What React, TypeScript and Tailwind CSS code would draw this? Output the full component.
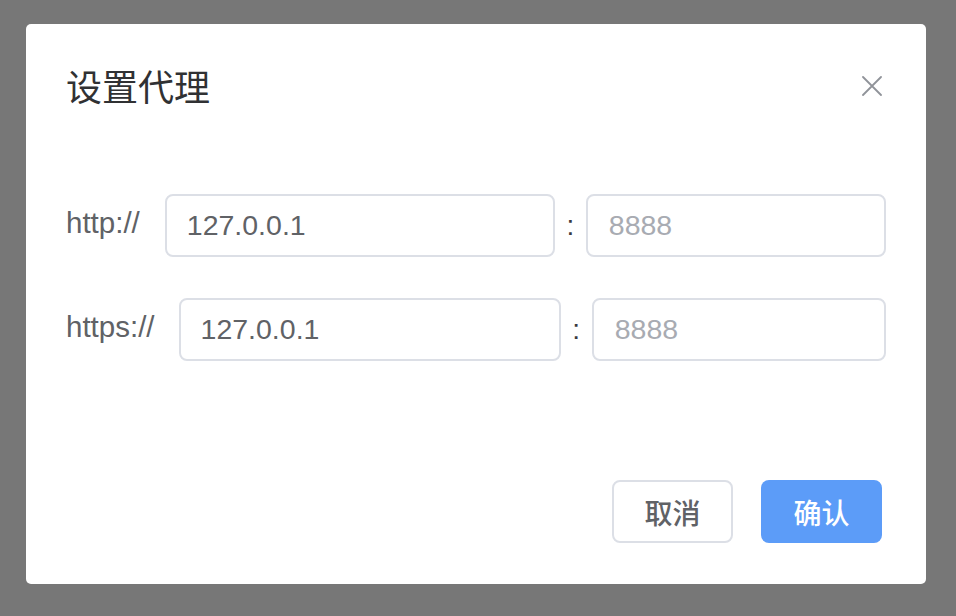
import React from "react";

const sans = "font-['Liberation_Sans','Noto_Sans_CJK_SC',sans-serif]";
const cjk = "font-['Noto_Sans_CJK_SC','Liberation_Sans',sans-serif]";

function Row({ label, host, labelGap }: { label: string; host: string; labelGap: string }) {
  return (
    <div className="flex items-center h-[63px]">
      <span className={`${sans} text-[29.5px] leading-[30px] text-[#606266] pb-[5px] ${labelGap}`}>{label}</span>
      <div className="flex flex-1 items-center min-w-0">
        <input
          readOnly
          defaultValue={host}
          className={`${sans} flex-[1.33] basis-0 min-w-0 h-[63px] rounded-[8px] border-2 border-[#dcdfe6] bg-white pl-[20px] text-[28.5px] text-[#606266] outline-none`}
        />
        <span className={`${sans} w-[31px] text-center text-[28px] font-normal text-[#3a3b3f]`}>:</span>
        <input
          readOnly
          placeholder="8888"
          className={`${sans} flex-1 basis-0 min-w-0 h-[63px] rounded-[8px] border-2 border-[#dcdfe6] bg-white pl-[21px] text-[28.5px] text-[#606266] placeholder:text-[#a8abb2] outline-none`}
        />
      </div>
    </div>
  );
}

export default function App() {
  return (
    <div className="w-[956px] h-[616px] bg-[#777777] overflow-hidden pt-[24px] pl-[26px]">
      <div className="w-[900px] h-[560px] bg-white rounded-[5px] flex flex-col px-[40px]">
        <div className="flex items-start justify-between pt-[44px]">
          <h1 className={`${cjk} text-[36px] leading-[35px] text-[#303133] font-normal`}>设置代理</h1>
          <button className="mt-[8px] mr-[4px] w-[20px] h-[20px] text-[#909399]" aria-label="close">
            <svg viewBox="0 0 20 20" width="20" height="20" fill="none" stroke="currentColor" strokeWidth="1.8" strokeLinecap="round">
              <path d="M1 1 L19 19 M19 1 L1 19" />
            </svg>
          </button>
        </div>
        <div className="flex flex-col gap-[41px] mt-[91px]">
          <Row label="http://" host="127.0.0.1" labelGap="mr-[25px]" />
          <Row label="https://" host="127.0.0.1" labelGap="mr-[24px]" />
        </div>
        <div className="mt-auto flex justify-end gap-[28px] pb-[41px] pr-[4px]">
          <button className={`${cjk} w-[121px] h-[63px] rounded-[8px] border-2 border-[#dcdfe6] bg-white text-[28px] font-medium text-[#606266]`}>
            取消
          </button>
          <button className={`${cjk} w-[121px] h-[63px] rounded-[8px] bg-[#5c9cf8] text-[28px] font-medium text-white`}>
            确认
          </button>
        </div>
      </div>
    </div>
  );
}
